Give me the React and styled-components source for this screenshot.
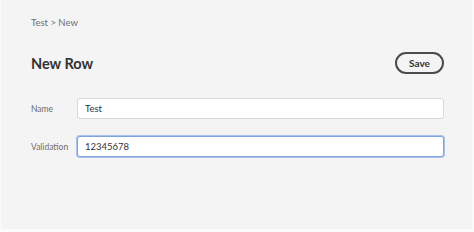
import React from "react";
import styled, { createGlobalStyle } from "styled-components";

const GlobalStyle = createGlobalStyle`
  html, body {
    margin: 0;
    padding: 0;
    background: #fbfbfb;
  }
  * {
    box-sizing: border-box;
  }
`;

const moveCaretToEnd = (e) => {
  const len = e.target.value.length;
  e.target.setSelectionRange(len, len);
};

const App = () => {
  return (
    <>
      <GlobalStyle />
      <Page>
        <Breadcrumb>Test &gt; New</Breadcrumb>
        <Header>
          <Title>New Row</Title>
          <SaveButton>Save</SaveButton>
        </Header>
        <Form>
          <Field>
            <Label>Name</Label>
            <Input defaultValue="Test" />
          </Field>
          <Field>
            <Label>Validation</Label>
            <Input
              $focused
              defaultValue="12345678"
              autoFocus
              onFocus={moveCaretToEnd}
            />
          </Field>
        </Form>
      </Page>
    </>
  );
};

// Page

const Page = styled.div`
  background: #f4f4f4;
  font-family: Lato, "Open Sans", sans-serif;
  height: 229px;
  margin-left: 1px;
  padding: 16px 28px 0 30px;
  width: 471px;
`;

const Breadcrumb = styled.div`
  color: #707070;
  font-size: 9.5px;
  line-height: 14px;
`;

// Header

const Header = styled.div`
  align-items: center;
  display: flex;
  justify-content: space-between;
  margin-top: 22px;
`;
const Title = styled.div`
  color: #323232;
  font-size: 14.5px;
  font-weight: 700;
`;
const SaveButton = styled.button`
  background: transparent;
  border: 2px solid #4b4b4b;
  border-radius: 12px;
  color: #323232;
  font-family: inherit;
  font-size: 10px;
  font-weight: 700;
  height: 22px;
  padding: 0;
  width: 49px;
`;

// Form

const Form = styled.div`
  display: flex;
  flex-direction: column;
  gap: 17px;
  margin-top: 24px;
`;
const Field = styled.div`
  align-items: center;
  display: flex;
`;
const Label = styled.div`
  color: #6e6e6e;
  font-size: 8.5px;
  width: 46px;
`;
const Input = styled.input`
  background: #fff;
  border: 1px solid ${(p) => (p.$focused ? "#7fa3dc" : "#d8d8d8")};
  border-radius: 3px;
  box-shadow: ${(p) => (p.$focused ? "0 0 0 1px #a9c2ea" : "none")};
  caret-color: #222;
  color: #323232;
  flex: 1;
  font-family: inherit;
  font-size: 9.5px;
  height: 21px;
  outline: none;
  padding: 0 7px;
`;

export default App;
